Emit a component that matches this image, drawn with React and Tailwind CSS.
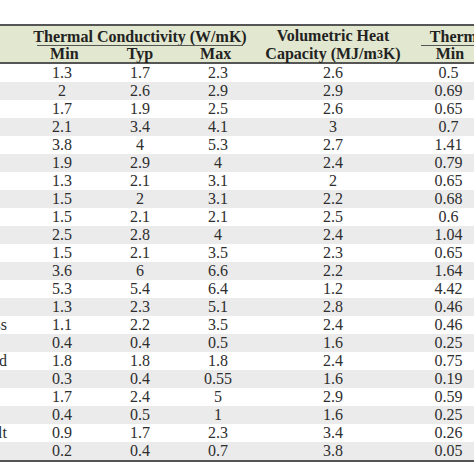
import React from 'react';

const rows = [
  ['', '1.3', '1.7', '2.3', '2.6', '0.5'],
  ['', '2', '2.6', '2.9', '2.9', '0.69'],
  ['', '1.7', '1.9', '2.5', '2.6', '0.65'],
  ['', '2.1', '3.4', '4.1', '3', '0.7'],
  ['', '3.8', '4', '5.3', '2.7', '1.41'],
  ['', '1.9', '2.9', '4', '2.4', '0.79'],
  ['', '1.3', '2.1', '3.1', '2', '0.65'],
  ['', '1.5', '2', '3.1', '2.2', '0.68'],
  ['', '1.5', '2.1', '2.1', '2.5', '0.6'],
  ['', '2.5', '2.8', '4', '2.4', '1.04'],
  ['', '1.5', '2.1', '3.5', '2.3', '0.65'],
  ['', '3.6', '6', '6.6', '2.2', '1.64'],
  ['', '5.3', '5.4', '6.4', '1.2', '4.42'],
  ['', '1.3', '2.3', '5.1', '2.8', '0.46'],
  ['Gneiss', '1.1', '2.2', '3.5', '2.4', '0.46'],
  ['', '0.4', '0.4', '0.5', '1.6', '0.25'],
  ['Sand', '1.8', '1.8', '1.8', '2.4', '0.75'],
  ['', '0.3', '0.4', '0.55', '1.6', '0.19'],
  ['', '1.7', '2.4', '5', '2.9', '0.59'],
  ['', '0.4', '0.5', '1', '1.6', '0.25'],
  ['Basalt', '0.9', '1.7', '2.3', '3.4', '0.26'],
  ['', '0.2', '0.4', '0.7', '3.8', '0.05'],
];

const cols = 'grid grid-cols-[23px_78px_78px_78px_152px_78px_78px_78px]';

export default function App() {
  return (
    <div className="w-[474px] h-[474px] bg-white overflow-hidden pt-[24px] font-['Liberation_Serif',serif] text-[#222]">
      <div className="w-[643px]">
        {/* header */}
        <div className={`${cols} bg-[#e2e8cf] border-t-2 border-b-2 border-[#555] font-bold text-[16px] leading-none`}>
          <div className="row-span-2" />
          <div className="col-span-3 h-[19px] flex items-center justify-center">
            <span className="mt-[2px] whitespace-nowrap">Thermal Conductivity (W/mK)</span>
          </div>
          <div className="row-span-2 flex flex-col items-center justify-center gap-[2px] pt-[1px] whitespace-nowrap">
            <span>Volumetric Heat</span>
            <span>
              Capacity (MJ/m<sup className="text-[12px] relative -top-[1px]">3</sup>K)
            </span>
          </div>
          <div className="col-span-3 h-[19px] flex items-center justify-center">
            <span className="mt-[2px] whitespace-nowrap">Thermal Diffusivity (mm²/s)</span>
          </div>
          <div className="col-span-3 mx-[14px] border-t border-[#555] grid grid-cols-3 h-[17px]">
            <span className="flex items-center justify-center -ml-[14px]">Min</span>
            <span className="flex items-center justify-center">Typ</span>
            <span className="flex items-center justify-center -mr-[14px]">Max</span>
          </div>
          <div className="col-span-3 mx-[12px] border-t border-[#555] grid grid-cols-3 h-[17px]">
            <span className="flex items-center justify-center -ml-[12px]">Min</span>
            <span className="flex items-center justify-center">Typ</span>
            <span className="flex items-center justify-center -mr-[12px]">Max</span>
          </div>
        </div>

        {/* body */}
        <div className="border-b-2 border-[#555] text-[16px] leading-none text-[#2e2e2e]">
          {rows.map((r, i) => (
            <div key={i} className={`${cols} h-[18px] items-center ${i % 2 ? 'bg-[#ebebeb]' : 'bg-white'}`}>
              <div className="overflow-hidden whitespace-nowrap flex justify-end pr-[16px]">
                <span>{r[0]}</span>
              </div>
              <div className="text-center">{r[1]}</div>
              <div className="text-center">{r[2]}</div>
              <div className="text-center">{r[3]}</div>
              <div className="text-center">{r[4]}</div>
              <div className="text-center pl-[1px]">{r[5]}</div>
              <div />
              <div />
            </div>
          ))}
        </div>
      </div>
    </div>
  );
}
